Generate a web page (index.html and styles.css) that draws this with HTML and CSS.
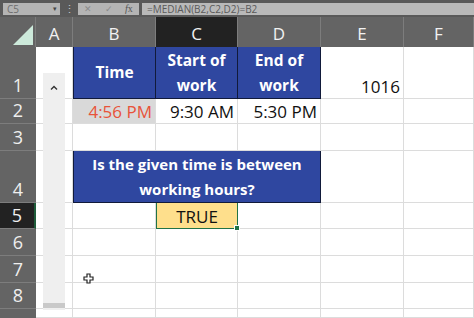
FILE: index.html
```html
<!DOCTYPE html>
<html lang="en">
<head>
  <meta charset="UTF-8">
  <title>MEDIAN between check</title>
  <link rel="stylesheet" href="styles.css">
</head>
<body>
  <!-- Formula bar -->
  <div class="formula-bar">
    <div class="name-box">C5<span class="drop">&#9662;</span></div>
    <div class="grip">&#8942;</div>
    <div class="buttons">
      <span class="btn">&#10005;</span>
      <span class="btn">&#10003;</span>
      <span class="btn fx"><i>f</i>x</span>
    </div>
    <div class="formula">=MEDIAN(B2,C2,D2)=B2</div>
  </div>

  <!-- Sheet grid -->
  <div class="sheet">
    <div class="corner"><span class="tri"></span></div>
    <div class="col-head">A</div>
    <div class="col-head">B</div>
    <div class="col-head active">C</div>
    <div class="col-head">D</div>
    <div class="col-head">E</div>
    <div class="col-head">F</div>

    <div class="row-head">1</div>
    <div class="cell"></div>
    <div class="cell blue first">Time</div>
    <div class="cell blue">Start of<br>work</div>
    <div class="cell blue">End of<br>work</div>
    <div class="cell num">1016</div>
    <div class="cell"></div>

    <div class="row-head">2</div>
    <div class="cell"></div>
    <div class="cell num red">4:56 PM</div>
    <div class="cell num">9:30 AM</div>
    <div class="cell num">5:30 PM</div>
    <div class="cell"></div>
    <div class="cell"></div>

    <div class="row-head">3</div>
    <div class="cell"></div>
    <div class="cell"></div>
    <div class="cell"></div>
    <div class="cell"></div>
    <div class="cell"></div>
    <div class="cell"></div>

    <div class="row-head">4</div>
    <div class="cell"></div>
    <div class="cell blue first merged">Is the given time is between<br>working hours?</div>
    <div class="cell"></div>
    <div class="cell"></div>

    <div class="row-head active">5</div>
    <div class="cell"></div>
    <div class="cell"></div>
    <div class="cell selected">TRUE<span class="handle"></span></div>
    <div class="cell"></div>
    <div class="cell"></div>
    <div class="cell"></div>

    <div class="row-head">6</div>
    <div class="cell"></div><div class="cell"></div><div class="cell"></div>
    <div class="cell"></div><div class="cell"></div><div class="cell"></div>

    <div class="row-head">7</div>
    <div class="cell"></div><div class="cell"></div><div class="cell"></div>
    <div class="cell"></div><div class="cell"></div><div class="cell"></div>

    <div class="row-head">8</div>
    <div class="cell"></div><div class="cell"></div><div class="cell"></div>
    <div class="cell"></div><div class="cell"></div><div class="cell"></div>

    <div class="row-head last"></div>
    <div class="cell"></div><div class="cell"></div><div class="cell"></div>
    <div class="cell"></div><div class="cell"></div><div class="cell"></div>

    <!-- collapsed strip over column A -->
    <div class="strip">
      <svg class="caret" width="8" height="5" viewBox="0 0 8 5">
        <path d="M1 4.5L4 1.5L7 4.5" fill="none" stroke="#333" stroke-width="1.4"/>
      </svg>
      <span class="thumb"></span>
    </div>

    <!-- mouse pointer -->
    <svg class="pointer" width="11" height="11" viewBox="0 0 11 11">
      <path d="M4 1h3v3h3v3H7v3H4V7H1V4h3z" fill="#fff" stroke="#222" stroke-width="1.2"/>
    </svg>
  </div>
</body>
</html>
```

FILE: styles.css
```css
/* Page */
body {
  margin: 0;
  background: #fff;
  font-family: "Open Sans", "Noto Sans", sans-serif;
  overflow: hidden;
}

/* Formula bar */
.formula-bar {
  height: 17px;
  background: #595959;
  display: flex;
  align-items: center;
  padding: 0 0 0 3px;
  color: #6e6e6e;
  font-size: 10px;
}

.name-box {
  width: 57px;
  height: 12px;
  background: #b4b4b4;
  display: flex;
  align-items: center;
  justify-content: space-between;
  padding: 0 3px 0 4px;
  box-sizing: border-box;
  line-height: 12px;
}

.drop {
  font-size: 7px;
  color: #444;
}

.grip {
  width: 18px;
  text-align: center;
  color: #c8c8c8;
  font-size: 11px;
}

.buttons {
  width: 61px;
  height: 12px;
  background: #b4b4b4;
  display: flex;
  justify-content: space-around;
  align-items: center;
  color: #8a8a8a;
  font-size: 9px;
}

.fx {
  color: #555;
  font-family: "Liberation Serif", serif;
  font-size: 10px;
}

.formula {
  flex: 1;
  height: 12px;
  margin-left: 3px;
  background: #b9b9b9;
  line-height: 12px;
  padding-left: 5px;
  color: #5a5a5a;
}

/* Sheet */
.sheet {
  position: relative;
  display: grid;
  grid-template-columns: 36px 37px 83px 82px 83px 83px 70px;
  grid-template-rows: 30px 52px 25px 27px 52px 26px 27px 27px 26px 9px;
}

.corner {
  background: #646464;
  border-right: 1px solid #7a7a7a;
  position: relative;
}

.tri {
  position: absolute;
  right: 2px;
  bottom: 2px;
  width: 0;
  height: 0;
  border-left: 20px solid transparent;
  border-bottom: 20px solid #cdeadb;
}

.col-head {
  background: #646464;
  color: #f2f2f2;
  border-right: 1px solid #7d7d7d;
  font-size: 17px;
  display: flex;
  align-items: center;
  justify-content: center;
  padding-top: 2px;
}

.col-head.active {
  background: #222;
}

.row-head {
  background: #646464;
  color: #efefef;
  border-bottom: 1px solid #7d7d7d;
  font-size: 18px;
  display: flex;
  align-items: flex-end;
  justify-content: center;
  padding-bottom: 1px;
  box-sizing: border-box;
}

.row-head.active {
  background: #222;
  border-right: 2px solid #1e5c3a;
}

.row-head.last {
  border-bottom: none;
}

.cell {
  border-right: 1px solid #dcdcdc;
  border-bottom: 1px solid #dcdcdc;
  box-sizing: border-box;
  font-size: 17px;
  color: #111;
  display: flex;
  align-items: flex-end;
  padding: 0 3px 0;
  line-height: 23px;
}

.num {
  justify-content: flex-end;
}

.red {
  color: #e8533a;
  background: #d9d9d9;
}

.blue {
  background: #2f47a0;
  color: #fff;
  font-weight: bold;
  font-size: 15.5px;
  justify-content: center;
  align-items: center;
  text-align: center;
  line-height: 25px;
  border-right: 1px solid #111a3a;
  border-bottom: 1px solid #111a3a;
  padding: 0;
}

.blue.first {
  border-left: 1px solid #111a3a;
}

.merged {
  grid-column: span 3;
  font-size: 15px;
}

.selected {
  position: relative;
  background: #fedf8c;
  justify-content: center;
  border: 1px solid #217346;
  border-top: none;
}

.handle {
  position: absolute;
  right: -3px;
  bottom: -3px;
  width: 4px;
  height: 4px;
  background: #217346;
  border: 1px solid #fff;
}

/* Collapsed strip over column A */
.strip {
  position: absolute;
  left: 43px;
  top: 56px;
  width: 22px;
  height: 237px;
  background: #efefef;
}

.caret {
  position: absolute;
  left: 7px;
  top: 12px;
}

.thumb {
  position: absolute;
  left: 0;
  right: 0;
  bottom: 2px;
  height: 5px;
  background: #c9c9c9;
}

.pointer {
  position: absolute;
  left: 83px;
  top: 256px;
}
```
